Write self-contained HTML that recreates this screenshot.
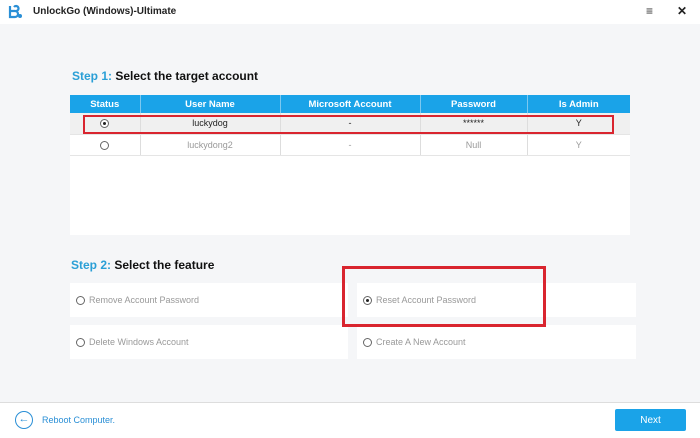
<!DOCTYPE html><html><head><style>
*{margin:0;padding:0;box-sizing:border-box}
body{width:700px;height:438px;background:#f5f6f8;font-family:"Liberation Sans",sans-serif;position:relative;overflow:hidden}
.a{position:absolute}
.tb{left:0;top:0;width:700px;height:24px;background:#fff}
table{border-collapse:collapse;position:absolute;left:70px;top:95px;width:560px;font-size:9px;text-align:center}
th{background:#1aa3e8;color:#fff;height:18px;border-left:1px solid #7cc8f0;font-weight:bold;font-size:9.5px}
td{height:21px;border-left:1px solid #ddd;border-bottom:1px solid #e5e5e5;color:#999}
tr.s td{background:#f0f0f0;color:#222}
.rad{display:inline-block;width:9px;height:9px;border:1px solid #666;border-radius:50%;vertical-align:middle;position:relative;background:#fff}
.rad.on::after{content:"";position:absolute;left:2px;top:2px;width:3px;height:3px;border-radius:50%;background:#222}
.opt{background:#fff;font-size:9px;color:#999;padding-left:6px;display:flex;align-items:center;gap:4px}
.h{font-size:12px;font-weight:bold;color:#111}.h span{color:#2a9fd6}
</style></head><body>
<div class="a tb"></div>
<svg class="a" style="left:7px;top:4px" width="16" height="16" viewBox="0 0 16 16"><path d="M3 2v11h5a3 3 0 0 0 0-6H3M9 7a2.5 2.5 0 1 0-2-4" fill="none" stroke="#2a8fd6" stroke-width="2.2"/><circle cx="13" cy="12" r="2" fill="#2a8fd6"/></svg>
<div class="a" style="left:33px;top:6px;font-size:10px;font-weight:bold;color:#222">UnlockGo (Windows)-Ultimate</div>
<div class="a" style="left:646px;top:4px;font-size:12px;color:#333">≡</div>
<div class="a" style="left:677px;top:4px;font-size:12px;color:#222;font-weight:bold">✕</div>
<div class="a h" style="left:72px;top:69px"><span>Step 1:</span> Select the target account</div>
<div class="a" style="left:70px;top:113px;width:560px;height:122px;background:#fff"></div>
<table><tr><th style="width:70px;border-left:0">Status</th><th style="width:140px">User Name</th><th style="width:140px">Microsoft Account</th><th style="width:107px">Password</th><th>Is Admin</th></tr>
<tr class="s"><td style="border-left:0"><span class="rad on"></span></td><td>luckydog</td><td>-</td><td>******</td><td>Y</td></tr>
<tr><td style="border-left:0"><span class="rad"></span></td><td>luckydong2</td><td>-</td><td>Null</td><td>Y</td></tr></table>
<div class="a" style="left:83px;top:115px;width:531px;height:19px;border:2px solid #d9252f"></div>
<div class="a h" style="left:71px;top:258px"><span>Step 2:</span> Select the feature</div>
<div class="a opt" style="left:70px;top:283px;width:278px;height:34px"><span class="rad"></span>Remove Account Password</div>
<div class="a opt" style="left:357px;top:283px;width:279px;height:34px"><span class="rad on"></span>Reset Account Password</div>
<div class="a opt" style="left:70px;top:325px;width:278px;height:34px"><span class="rad"></span>Delete Windows Account</div>
<div class="a opt" style="left:357px;top:325px;width:279px;height:34px"><span class="rad"></span>Create A New Account</div>
<div class="a" style="left:342px;top:266px;width:204px;height:61px;border:3px solid #d9252f"></div>
<div class="a" style="left:0;top:402px;width:700px;height:36px;background:#fff;border-top:1px solid #ddd"></div>
<div class="a" style="left:15px;top:411px;width:18px;height:18px;border:1.5px solid #2a8fd6;border-radius:50%;color:#2a8fd6;font-size:11px;text-align:center;line-height:15px">←</div>
<div class="a" style="left:42px;top:415px;font-size:9px;color:#2a8fd6">Reboot Computer.</div>
<div class="a" style="left:615px;top:409px;width:71px;height:22px;background:#1aa3e8;border-radius:2px;color:#fff;font-size:10px;display:flex;align-items:center;justify-content:center">Next</div>
</body></html>
